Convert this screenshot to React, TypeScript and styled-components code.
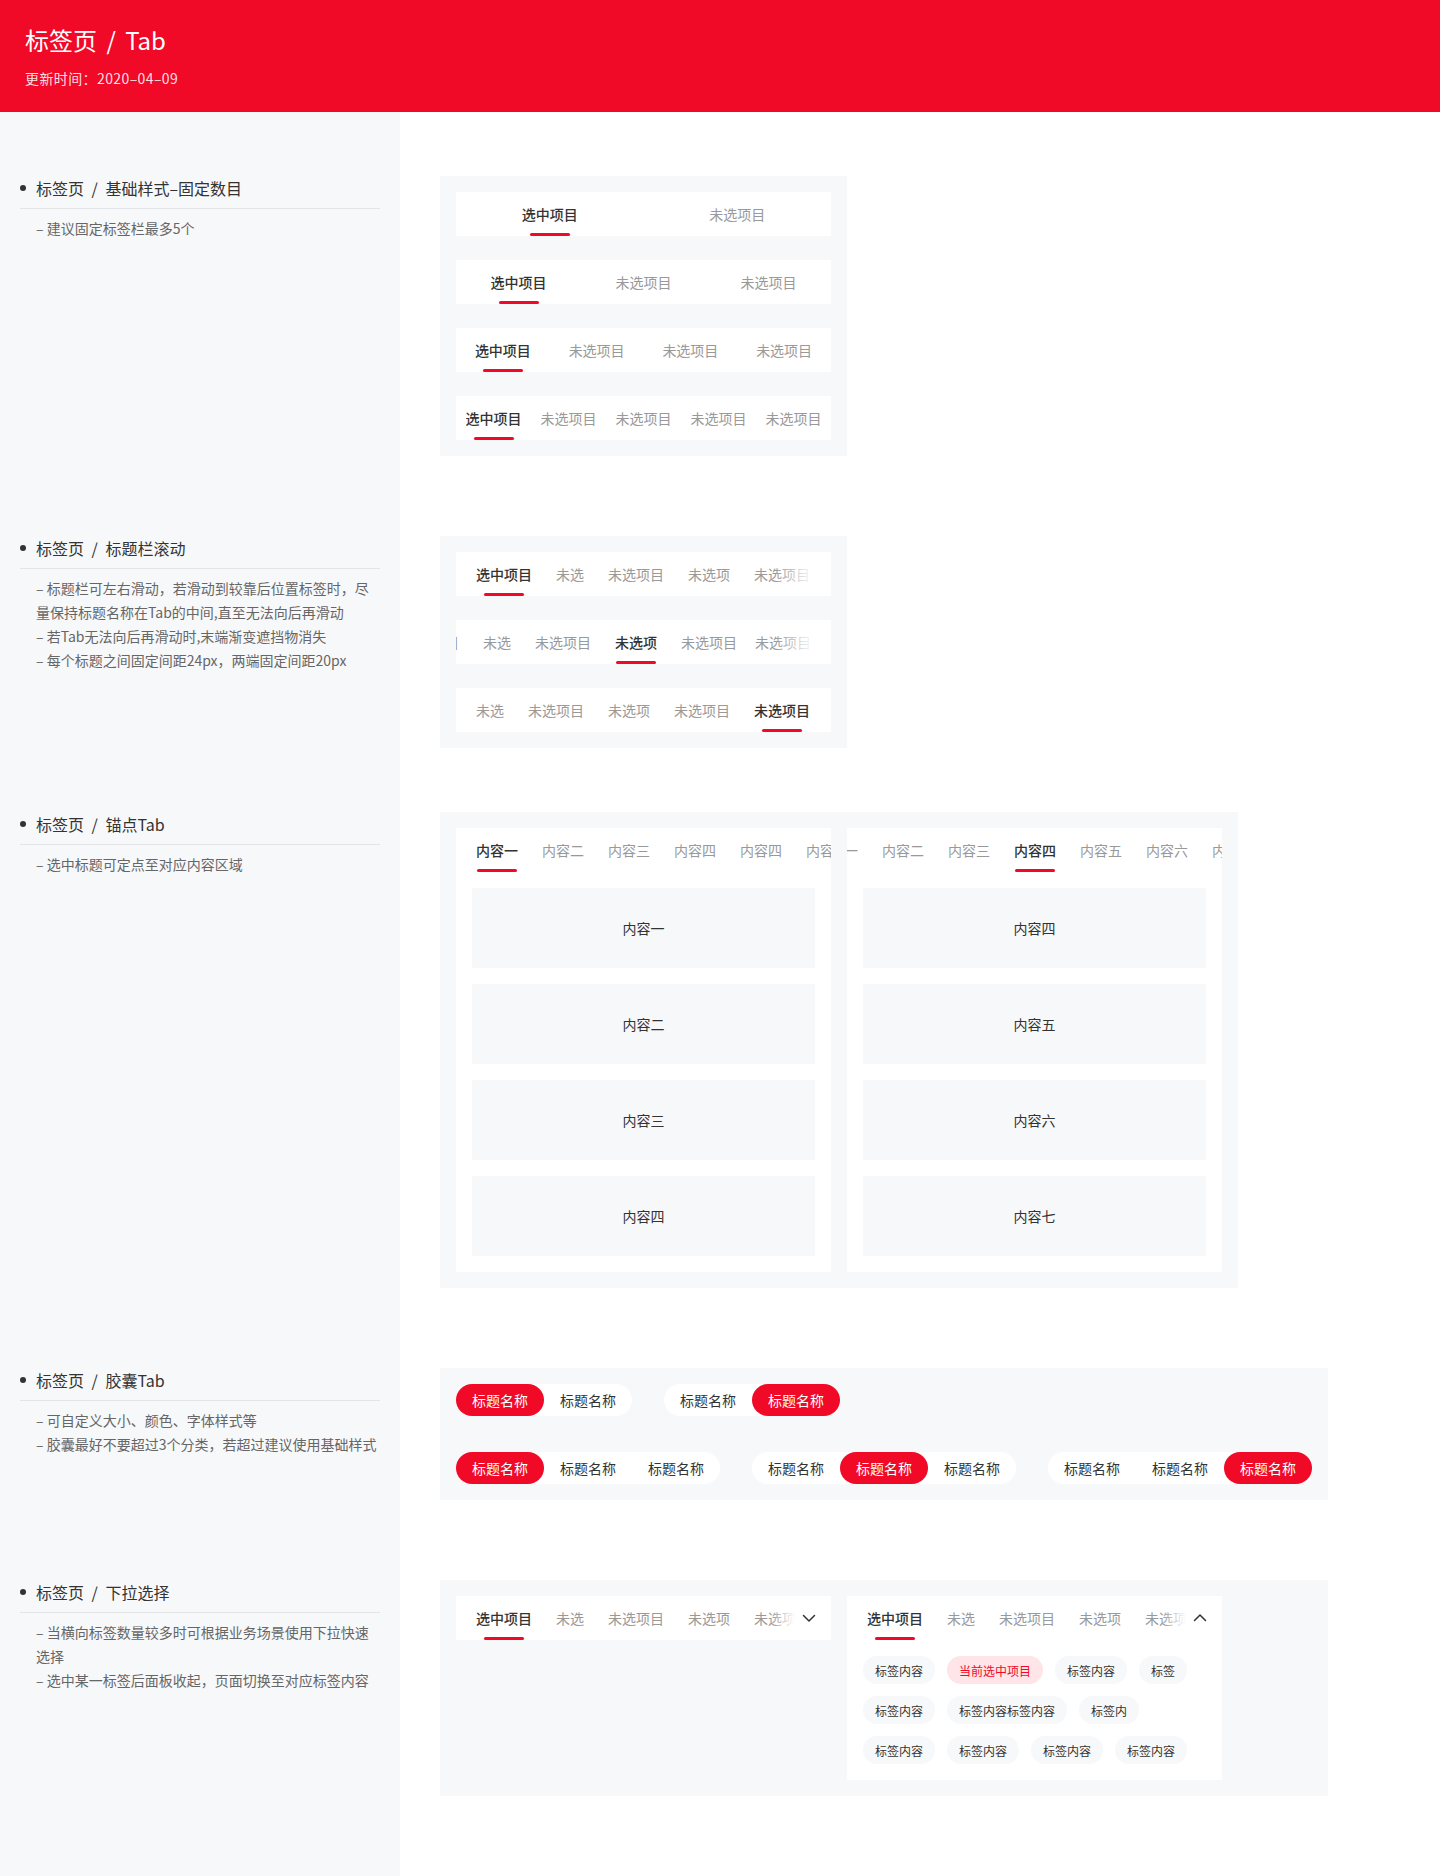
import React from 'react';
import styled, { createGlobalStyle } from 'styled-components';

const RED = '#F00A28';
const GRAY_BG = '#F7F8FA';

const GlobalStyle = createGlobalStyle`
  html, body { margin: 0; padding: 0; }
  body {
    font-family: "Noto Sans CJK SC", "Noto Sans", sans-serif;
    background: #fff;
    color: #333;
    -webkit-font-smoothing: antialiased;
  }
  * { box-sizing: border-box; }
`;

const Header = styled.header`
  height: 112px;
  background: ${RED};
  padding: 26px 25px 0;
  color: #fff;
`;

const HeaderTitle = styled.h1`
  margin: 0;
  font-size: 24px;
  font-weight: 400;
  line-height: 28px;
  word-spacing: 4px;
`;

const HeaderSub = styled.div`
  margin-top: 14px;
  font-size: 14px;
  line-height: 20px;
  letter-spacing: 0.4px;
  color: rgba(255, 255, 255, 0.88);
`;

const Content = styled.div`
  display: grid;
  grid-template-columns: 400px 1fr;
`;

const Side = styled.div<{ $top: number; $bottom?: number }>`
  background: ${GRAY_BG};
  padding: ${(p) => p.$top}px 20px ${(p) => p.$bottom ?? 0}px;
`;

const Main = styled.div<{ $top: number; $bottom?: number }>`
  padding: ${(p) => p.$top}px 0 ${(p) => p.$bottom ?? 0}px 40px;
`;

const SideTitle = styled.div`
  display: flex;
  align-items: center;
  gap: 10px;
  font-size: 16px;
  line-height: 24px;
  color: #333;
  word-spacing: 4px;
  &::before {
    content: '';
    width: 6px;
    height: 6px;
    border-radius: 50%;
    background: #333;
  }
`;

const Divider = styled.div`
  margin-top: 8px;
  height: 1px;
  background: #E3E4E6;
`;

const Desc = styled.div`
  margin-top: 7px;
  padding-left: 16px;
  font-size: 14px;
  line-height: 24px;
  color: #666;
`;

const DescLine = styled.div`
  white-space: nowrap;
`;

const DemoBox = styled.div<{ $w: number }>`
  width: ${(p) => p.$w}px;
  background: ${GRAY_BG};
  padding: 16px;
  display: flex;
  flex-direction: column;
  gap: 24px;
`;

const DemoRow = styled.div`
  display: flex;
  gap: 16px;
  align-items: flex-start;
`;

/* fixed tabs */
const FixedBar = styled.div`
  width: 375px;
  height: 44px;
  background: #fff;
  display: flex;
`;

const Underlined = styled.div<{ $active?: boolean }>`
  position: relative;
  display: flex;
  align-items: center;
  font-size: 14px;
  line-height: 20px;
  white-space: nowrap;
  color: ${(p) => (p.$active ? '#333' : '#999')};
  font-weight: ${(p) => (p.$active ? 500 : 400)};
  &::after {
    content: '';
    display: ${(p) => (p.$active ? 'block' : 'none')};
    position: absolute;
    left: 50%;
    bottom: 0;
    width: 40px;
    height: 3px;
    margin-left: -20px;
    border-radius: 2px;
    background: ${RED};
  }
`;

const FixedTab = styled(Underlined)`
  flex: 1;
  justify-content: center;
`;

/* scroll tabs */
const ScrollBar = styled.div`
  position: relative;
  width: 375px;
  height: 44px;
  flex: none;
  background: #fff;
  overflow: hidden;
`;

const Track = styled.div<{ $offset?: number }>`
  display: flex;
  gap: 24px;
  height: 100%;
  padding: 0 20px;
  margin-left: ${(p) => p.$offset ?? 0}px;
`;

const ScrollTab = styled(Underlined)<{ $shift?: number }>`
  flex: none;
  height: 100%;
  margin-left: ${(p) => p.$shift ?? 0}px;
`;

const Fade = styled.div`
  position: absolute;
  top: 0;
  right: 0;
  bottom: 0;
  width: 56px;
  background: linear-gradient(to right, rgba(255, 255, 255, 0) 0%, #fff 70%);
`;

const DropMask = styled.div`
  position: absolute;
  top: 0;
  right: 0;
  bottom: 0;
  width: 60px;
  display: flex;
  align-items: center;
  justify-content: flex-end;
  padding-right: 14px;
  background: linear-gradient(to right, rgba(255, 255, 255, 0) 0%, #fff 40%);
`;

/* anchor */
const Panel = styled.div`
  width: 375px;
  flex: none;
  background: #fff;
  padding-bottom: 16px;
  display: flex;
  flex-direction: column;
`;

const Blocks = styled.div`
  padding: 16px 16px 0;
  display: flex;
  flex-direction: column;
  gap: 16px;
`;

const Block = styled.div`
  height: 80px;
  background: ${GRAY_BG};
  display: flex;
  align-items: center;
  justify-content: center;
  font-size: 14px;
  color: #333;
`;

/* capsule */
const CapsuleBox = styled(DemoBox)`
  gap: 36px;
`;

const CapsuleRow = styled.div`
  display: flex;
  gap: 32px;
`;

const CapsuleGroup = styled.div`
  display: flex;
  background: #fff;
  border-radius: 16px;
`;

const Capsule = styled.div<{ $active?: boolean }>`
  width: 88px;
  height: 32px;
  border-radius: 16px;
  display: flex;
  align-items: center;
  justify-content: center;
  font-size: 14px;
  background: ${(p) => (p.$active ? RED : 'transparent')};
  color: ${(p) => (p.$active ? '#fff' : '#333')};
`;

/* dropdown tags */
const TagWrap = styled.div`
  display: flex;
  flex-wrap: wrap;
  gap: 12px;
  padding: 16px 16px 0;
`;

const Tag = styled.div<{ $active?: boolean }>`
  height: 28px;
  padding: 0 12px;
  border-radius: 14px;
  display: flex;
  align-items: center;
  font-size: 12px;
  white-space: nowrap;
  background: ${(p) => (p.$active ? '#FFE4E8' : GRAY_BG)};
  color: ${(p) => (p.$active ? RED : '#333')};
`;

const Chevron = ({ up }: { up?: boolean }) => (
  <svg width="16" height="16" viewBox="0 0 16 16" fill="none">
    <path
      d={up ? 'M2.5 10.5 L8 5 L13.5 10.5' : 'M2.5 5.5 L8 11 L13.5 5.5'}
      stroke="#333"
      strokeWidth="1.5"
      strokeLinecap="round"
      strokeLinejoin="round"
    />
  </svg>
);

type Item = { t: string; a?: boolean; s?: number };

const TabItems = ({ items }: { items: Item[] }) => (
  <>
    {items.map((it, i) => (
      <ScrollTab key={i} $active={it.a} $shift={it.s}>
        {it.t}
      </ScrollTab>
    ))}
  </>
);

const ScrollTabs = ({ items, offset, fade }: { items: Item[]; offset?: number; fade?: boolean }) => (
  <ScrollBar>
    <Track $offset={offset}>
      <TabItems items={items} />
    </Track>
    {fade && <Fade />}
  </ScrollBar>
);

const DropTabs = ({ items, up }: { items: Item[]; up?: boolean }) => (
  <ScrollBar>
    <Track>
      <TabItems items={items} />
    </Track>
    <DropMask>
      <Chevron up={up} />
    </DropMask>
  </ScrollBar>
);

const SectionSide = ({ title, lines, top, bottom }: { title: string; lines: string[]; top: number; bottom?: number }) => (
  <Side $top={top} $bottom={bottom}>
    <SideTitle>{title}</SideTitle>
    <Divider />
    <Desc>
      {lines.map((l, i) => (
        <DescLine key={i}>{l}</DescLine>
      ))}
    </Desc>
  </Side>
);

const scroll1: Item[] = [
  { t: '选中项目', a: true },
  { t: '未选' },
  { t: '未选项目' },
  { t: '未选项' },
  { t: '未选项目' },
  { t: '未选项目' },
];
const scroll2: Item[] = [
  { t: '未选项目' },
  { t: '未选' },
  { t: '未选项目' },
  { t: '未选项', a: true },
  { t: '未选项目' },
  { t: '未选项目', s: -6 },
];
const scroll3: Item[] = [
  { t: '未选' },
  { t: '未选项目' },
  { t: '未选项' },
  { t: '未选项目' },
  { t: '未选项目', a: true },
];

const anchor1: Item[] = [
  { t: '内容一', a: true },
  { t: '内容二' },
  { t: '内容三' },
  { t: '内容四' },
  { t: '内容四' },
  { t: '内容五' },
];
const anchor2: Item[] = [
  { t: '内容一' },
  { t: '内容二' },
  { t: '内容三' },
  { t: '内容四', a: true },
  { t: '内容五' },
  { t: '内容六' },
  { t: '内容七' },
];

const tags: Item[] = [
  { t: '标签内容' },
  { t: '当前选中项目', a: true },
  { t: '标签内容' },
  { t: '标签' },
  { t: '标签内容' },
  { t: '标签内容标签内容' },
  { t: '标签内' },
  { t: '标签内容' },
  { t: '标签内容' },
  { t: '标签内容' },
  { t: '标签内容' },
];

const capsuleRows: number[][] = [
  [2, 2],
  [3, 3, 3],
];
const capsuleActive: number[][] = [
  [0, 1],
  [0, 1, 2],
];

export default function App() {
  return (
    <>
      <GlobalStyle />
      <Header>
        <HeaderTitle>标签页 / Tab</HeaderTitle>
        <HeaderSub>更新时间：2020–04–09</HeaderSub>
      </Header>
      <Content>
        <SectionSide title="标签页 / 基础样式–固定数目" lines={['– 建议固定标签栏最多5个']} top={64} />
        <Main $top={64}>
          <DemoBox $w={407}>
            {[2, 3, 4, 5].map((n) => (
              <FixedBar key={n}>
                {Array.from({ length: n }).map((_, i) => (
                  <FixedTab key={i} $active={i === 0}>
                    {i === 0 ? '选中项目' : '未选项目'}
                  </FixedTab>
                ))}
              </FixedBar>
            ))}
          </DemoBox>
        </Main>

        <SectionSide
          title="标签页 / 标题栏滚动"
          lines={[
            '– 标题栏可左右滑动，若滑动到较靠后位置标签时，尽',
            '量保持标题名称在Tab的中间,直至无法向后再滑动',
            '– 若Tab无法向后再滑动时,末端渐变遮挡物消失',
            '– 每个标题之间固定间距24px，两端固定间距20px',
          ]}
          top={80}
        />
        <Main $top={80}>
          <DemoBox $w={407}>
            <ScrollTabs items={scroll1} fade />
            <ScrollTabs items={scroll2} offset={-73} fade />
            <ScrollTabs items={scroll3} />
          </DemoBox>
        </Main>

        <SectionSide title="标签页 / 锚点Tab" lines={['– 选中标题可定点至对应内容区域']} top={64} />
        <Main $top={64}>
          <DemoBox $w={798}>
            <DemoRow>
              <Panel>
                <ScrollTabs items={anchor1} />
                <Blocks>
                  {['内容一', '内容二', '内容三', '内容四'].map((b) => (
                    <Block key={b}>{b}</Block>
                  ))}
                </Blocks>
              </Panel>
              <Panel>
                <ScrollTabs items={anchor2} offset={-51} />
                <Blocks>
                  {['内容四', '内容五', '内容六', '内容七'].map((b) => (
                    <Block key={b}>{b}</Block>
                  ))}
                </Blocks>
              </Panel>
            </DemoRow>
          </DemoBox>
        </Main>

        <SectionSide
          title="标签页 / 胶囊Tab"
          lines={['– 可自定义大小、颜色、字体样式等', '– 胶囊最好不要超过3个分类，若超过建议使用基础样式']}
          top={80}
        />
        <Main $top={80}>
          <CapsuleBox $w={888}>
            {capsuleRows.map((row, r) => (
              <CapsuleRow key={r}>
                {row.map((n, g) => (
                  <CapsuleGroup key={g}>
                    {Array.from({ length: n }).map((_, i) => (
                      <Capsule key={i} $active={i === capsuleActive[r][g]}>
                        标题名称
                      </Capsule>
                    ))}
                  </CapsuleGroup>
                ))}
              </CapsuleRow>
            ))}
          </CapsuleBox>
        </Main>

        <SectionSide
          title="标签页 / 下拉选择"
          lines={[
            '– 当横向标签数量较多时可根据业务场景使用下拉快速',
            '选择',
            '– 选中某一标签后面板收起，页面切换至对应标签内容',
          ]}
          top={80}
          bottom={80}
        />
        <Main $top={80} $bottom={80}>
          <DemoBox $w={888}>
            <DemoRow>
              <DropTabs items={scroll1} />
              <Panel>
                <DropTabs items={scroll1} up />
                <TagWrap>
                  {tags.map((t, i) => (
                    <Tag key={i} $active={t.a}>
                      {t.t}
                    </Tag>
                  ))}
                </TagWrap>
              </Panel>
            </DemoRow>
          </DemoBox>
        </Main>
      </Content>
    </>
  );
}
